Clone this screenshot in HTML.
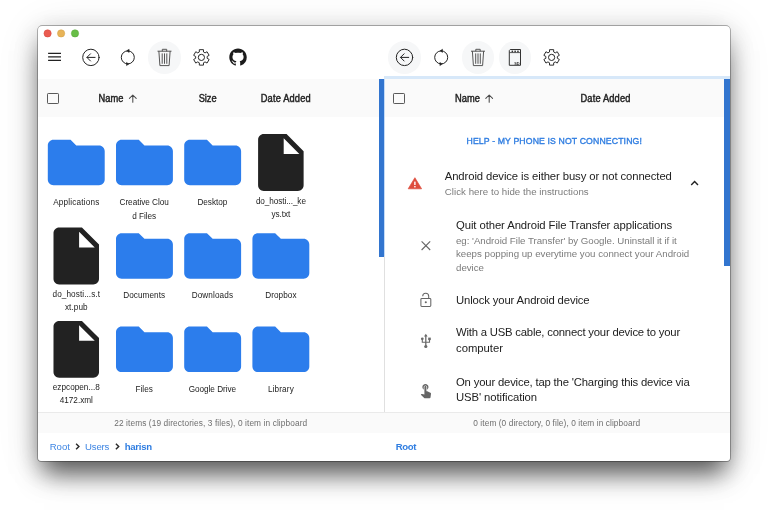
<!DOCTYPE html>
<html lang="en"><head><meta charset="utf-8"><title>OpenMTP</title>
<style>
html,body{margin:0;padding:0;}
body{width:768px;height:512px;background:#fff;position:relative;overflow:hidden;font-family:"Liberation Sans",sans-serif;}
.abs{position:absolute;}
.t{position:absolute;line-height:20px;white-space:nowrap;}
#win{position:absolute;left:38px;top:25.9px;width:692px;height:435.2px;background:#fff;border-radius:4px 4px 3px 3px;
 box-shadow:0 0 0 0.7px rgba(0,0,0,.4), 0 19px 24px -6px rgba(0,0,0,.55), 0 7px 24px rgba(0,0,0,.2), 0 5px 44px rgba(0,0,0,.11);}
.hdr{position:absolute;top:79px;height:37.9px;background:#fafafa;}
.sbar{position:absolute;top:412px;height:20.5px;background:#fafafa;border-top:1px solid #eaeaea;box-sizing:border-box;}
.cb{position:absolute;top:92.5px;width:11.9px;height:11.5px;border:1.2px solid #5a5a5a;border-radius:1.2px;box-sizing:border-box;}
.ibg{position:absolute;width:32.6px;height:32.6px;border-radius:50%;background:#f6f7f8;top:41.1px;}
svg{position:absolute;overflow:visible;will-change:transform;}
#txt{position:absolute;left:0;top:0;width:768px;height:512px;will-change:transform;}

</style></head>
<body>
<div id="win"></div>

<!-- header rows -->
<div class="hdr" style="left:38px;width:341px;"></div>
<div class="hdr" style="left:384px;width:340px;"></div>
<div class="abs" style="left:384px;top:75.9px;width:346px;height:3.1px;background:#d7e8f9;"></div>
<div class="abs" style="left:379.2px;top:79px;width:5.1px;height:177.7px;background:#3275cf;"></div>
<div class="abs" style="left:384.3px;top:79px;width:0.9px;height:177.7px;background:#c3dbf8;"></div>
<div class="abs" style="left:384px;top:256px;width:0.7px;height:156px;background:#e0e0e0;"></div>
<div class="abs" style="left:724.2px;top:79px;width:5.8px;height:186.5px;background:#3275cf;"></div>
<div class="cb" style="left:47.2px;"></div>
<div class="cb" style="left:393.4px;"></div>

<!-- status bars -->
<div class="sbar" style="left:38px;width:346px;"></div>
<div class="sbar" style="left:384px;width:346px;"></div>

<!-- toolbar icon backgrounds -->
<div class="ibg" style="left:148.1px;"></div>
<div class="ibg" style="left:388.2px;"></div>
<div class="ibg" style="left:461.6px;"></div>
<div class="ibg" style="left:498.5px;"></div>

<svg width="768" height="512" viewBox="0 0 768 512" style="left:0;top:0;">


<!-- traffic lights -->
<circle cx="47.6" cy="33.4" r="3.65" fill="#ea5b50" stroke="#d5493f" stroke-width="0.5"/>
<circle cx="61.1" cy="33.4" r="3.65" fill="#e8b458" stroke="#d3a048" stroke-width="0.5"/>
<circle cx="75" cy="33.4" r="3.65" fill="#68be47" stroke="#56a838" stroke-width="0.5"/>
<!-- hamburger -->
<g stroke="#222" stroke-width="1.25"><path d="M48.1 53.4H61M48.1 56.9H61M48.1 60.4H61"/></g>
<g transform="translate(90.9 57.4)"><g fill="none" stroke="#222" stroke-width="1" stroke-linecap="round" stroke-linejoin="round">
 <circle cx="0" cy="0" r="8.2"/>
 <path d="M4.2 0H-3.8M-0.4 -3.6L-4 0L-0.4 3.6"/>
</g></g>
<g transform="translate(127.8 57.4)"><g fill="none" stroke="#222" stroke-width="1" stroke-linejoin="round">
 <circle cx="0" cy="0" r="6.5"/>
 <path d="M-1.1 -6.6L1.3 -8.2V-5Z" fill="#222" stroke-width="0.5"/>
 <path d="M1.1 6.6L-1.3 8.2V5Z" fill="#222" stroke-width="0.5"/>
</g></g>
<g transform="translate(164.5 57.4)"><g fill="none" stroke="#555" stroke-width="1" stroke-linecap="round" stroke-linejoin="round">
 <path d="M-6.6 -6.2H6.6"/>
 <path d="M-2.2 -6.4V-8.1H2.2V-6.4"/>
 <path d="M-5.6 -6L-4.6 8.2H4.6L5.6 -6"/>
 <path d="M-2.3 -3.6V6M0 -3.6V6M2.3 -3.6V6"/>
</g></g>
<g transform="translate(404.5 57.4)"><g fill="none" stroke="#222" stroke-width="1" stroke-linecap="round" stroke-linejoin="round">
 <circle cx="0" cy="0" r="8.2"/>
 <path d="M4.2 0H-3.8M-0.4 -3.6L-4 0L-0.4 3.6"/>
</g></g>
<g transform="translate(441.2 57.4)"><g fill="none" stroke="#222" stroke-width="1" stroke-linejoin="round">
 <circle cx="0" cy="0" r="6.5"/>
 <path d="M-1.1 -6.6L1.3 -8.2V-5Z" fill="#222" stroke-width="0.5"/>
 <path d="M1.1 6.6L-1.3 8.2V5Z" fill="#222" stroke-width="0.5"/>
</g></g>
<g transform="translate(478 57.4)"><g fill="none" stroke="#555" stroke-width="1" stroke-linecap="round" stroke-linejoin="round">
 <path d="M-6.6 -6.2H6.6"/>
 <path d="M-2.2 -6.4V-8.1H2.2V-6.4"/>
 <path d="M-5.6 -6L-4.6 8.2H4.6L5.6 -6"/>
 <path d="M-2.3 -3.6V6M0 -3.6V6M2.3 -3.6V6"/>
</g></g>

<path d="M199.32 51.99 L199.33 49.67 L203.47 49.67 L203.48 51.99 L205.05 52.89 L207.06 51.74 L209.13 55.33 L207.13 56.49 L207.13 58.31 L209.13 59.47 L207.06 63.06 L205.05 61.91 L203.48 62.81 L203.47 65.13 L199.33 65.13 L199.32 62.81 L197.75 61.91 L195.74 63.06 L193.67 59.47 L195.67 58.31 L195.67 56.49 L193.67 55.33 L195.74 51.74 L197.75 52.89Z" fill="none" stroke="#222" stroke-width="0.95" stroke-linejoin="round"/><circle cx="201.4" cy="57.4" r="3.1" fill="none" stroke="#222" stroke-width="1"/>
<path d="M549.52 51.99 L549.53 49.67 L553.67 49.67 L553.68 51.99 L555.25 52.89 L557.26 51.74 L559.33 55.33 L557.33 56.49 L557.33 58.31 L559.33 59.47 L557.26 63.06 L555.25 61.91 L553.68 62.81 L553.67 65.13 L549.53 65.13 L549.52 62.81 L547.95 61.91 L545.94 63.06 L543.87 59.47 L545.87 58.31 L545.87 56.49 L543.87 55.33 L545.94 51.74 L547.95 52.89Z" fill="none" stroke="#222" stroke-width="0.95" stroke-linejoin="round"/><circle cx="551.6" cy="57.4" r="3.1" fill="none" stroke="#222" stroke-width="1"/>
<!-- github -->
<g transform="translate(229.3 48.6) scale(1.09)">
<path fill="#1b1b1b" d="M8 0C3.58 0 0 3.58 0 8c0 3.54 2.29 6.53 5.47 7.59.4.07.55-.17.55-.38 0-.19-.01-.82-.01-1.49-2.01.37-2.53-.49-2.69-.94-.09-.23-.48-.94-.82-1.13-.28-.15-.68-.52-.01-.53.63-.01 1.08.58 1.23.82.72 1.21 1.87.87 2.33.66.07-.52.28-.87.51-1.07-1.78-.2-3.64-.89-3.64-3.95 0-.87.31-1.59.82-2.15-.08-.2-.36-1.02.08-2.12 0 0 .67-.21 2.2.82.64-.18 1.32-.27 2-.27.68 0 1.36.09 2 .27 1.53-1.04 2.2-.82 2.2-.82.44 1.1.16 1.92.08 2.12.51.56.82 1.27.82 2.15 0 3.07-1.87 3.75-3.65 3.95.29.25.54.73.54 1.48 0 1.07-.01 1.93-.01 2.2 0 .21.15.46.55.38A8.013 8.013 0 0016 8c0-4.42-3.58-8-8-8z"/>
</g>
<!-- sd card -->
<g fill="none" stroke="#333" stroke-width="1" stroke-linejoin="round">
 <path d="M510.2 49.5H520.5V65.3H509.3V50.6Z"/>
 <path d="M509.6 52.6H520.4" stroke-width="0.8"/>
</g>
<g fill="#333"><rect x="511.6" y="50.6" width="1.5" height="1.7"/><rect x="514.4" y="50.6" width="1.5" height="1.7"/><rect x="517.2" y="50.6" width="1.5" height="1.7"/></g>
<text x="514.2" y="64.5" font-family="Liberation Sans, sans-serif" font-size="4.2" textLength="5.4" lengthAdjust="spacingAndGlyphs" font-weight="700" fill="#333">SD</text>

<!-- sort arrows -->
<g fill="none" stroke="#4a4a4a" stroke-width="1.05" stroke-linecap="round" stroke-linejoin="round">
 <path d="M132.8 102.2V95.2M129.4 98.4L132.8 95L136.2 98.4"/>
 <path d="M489.2 102.2V95.2M485.8 98.4L489.2 95L492.6 98.4"/>
</g>

<!-- breadcrumb chevrons -->
<g fill="none" stroke="#2a2a2a" stroke-width="1.45" stroke-linejoin="miter">
 <path d="M76.1 443.8L78.9 446.5L76.1 449.2"/>
 <path d="M115.9 443.8L118.7 446.5L115.9 449.2"/>
</g>

<!-- grid icons -->
<g transform="translate(42.10 128.40) scale(2.8458)"><path d="M10 4H4c-1.1 0-1.99.9-1.99 2L2 18c0 1.1.9 2 2 2h16c1.1 0 2-.9 2-2V8c0-1.1-.9-2-2-2h-8l-2-2z" fill="#2c7dec"/></g>
<g transform="translate(110.30 128.40) scale(2.8458)"><path d="M10 4H4c-1.1 0-1.99.9-1.99 2L2 18c0 1.1.9 2 2 2h16c1.1 0 2-.9 2-2V8c0-1.1-.9-2-2-2h-8l-2-2z" fill="#2c7dec"/></g>
<g transform="translate(178.50 128.40) scale(2.8458)"><path d="M10 4H4c-1.1 0-1.99.9-1.99 2L2 18c0 1.1.9 2 2 2h16c1.1 0 2-.9 2-2V8c0-1.1-.9-2-2-2h-8l-2-2z" fill="#2c7dec"/></g>
<g transform="translate(246.70 128.40) scale(2.8458)"><path d="M6 2c-1.1 0-1.99.9-1.99 2L4 20c0 1.1.89 2 1.99 2H18c1.1 0 2-.9 2-2V8l-6-6H6zm7 7V3.5L18.5 9H13z" fill="#222"/></g>
<g transform="translate(42.10 221.80) scale(2.8458)"><path d="M6 2c-1.1 0-1.99.9-1.99 2L4 20c0 1.1.89 2 1.99 2H18c1.1 0 2-.9 2-2V8l-6-6H6zm7 7V3.5L18.5 9H13z" fill="#222"/></g>
<g transform="translate(110.30 221.80) scale(2.8458)"><path d="M10 4H4c-1.1 0-1.99.9-1.99 2L2 18c0 1.1.9 2 2 2h16c1.1 0 2-.9 2-2V8c0-1.1-.9-2-2-2h-8l-2-2z" fill="#2c7dec"/></g>
<g transform="translate(178.50 221.80) scale(2.8458)"><path d="M10 4H4c-1.1 0-1.99.9-1.99 2L2 18c0 1.1.9 2 2 2h16c1.1 0 2-.9 2-2V8c0-1.1-.9-2-2-2h-8l-2-2z" fill="#2c7dec"/></g>
<g transform="translate(246.70 221.80) scale(2.8458)"><path d="M10 4H4c-1.1 0-1.99.9-1.99 2L2 18c0 1.1.9 2 2 2h16c1.1 0 2-.9 2-2V8c0-1.1-.9-2-2-2h-8l-2-2z" fill="#2c7dec"/></g>
<g transform="translate(42.10 315.20) scale(2.8458)"><path d="M6 2c-1.1 0-1.99.9-1.99 2L4 20c0 1.1.89 2 1.99 2H18c1.1 0 2-.9 2-2V8l-6-6H6zm7 7V3.5L18.5 9H13z" fill="#222"/></g>
<g transform="translate(110.30 315.20) scale(2.8458)"><path d="M10 4H4c-1.1 0-1.99.9-1.99 2L2 18c0 1.1.9 2 2 2h16c1.1 0 2-.9 2-2V8c0-1.1-.9-2-2-2h-8l-2-2z" fill="#2c7dec"/></g>
<g transform="translate(178.50 315.20) scale(2.8458)"><path d="M10 4H4c-1.1 0-1.99.9-1.99 2L2 18c0 1.1.9 2 2 2h16c1.1 0 2-.9 2-2V8c0-1.1-.9-2-2-2h-8l-2-2z" fill="#2c7dec"/></g>
<g transform="translate(246.70 315.20) scale(2.8458)"><path d="M10 4H4c-1.1 0-1.99.9-1.99 2L2 18c0 1.1.9 2 2 2h16c1.1 0 2-.9 2-2V8c0-1.1-.9-2-2-2h-8l-2-2z" fill="#2c7dec"/></g>


<!-- right pane icons -->
<!-- warning -->
<path d="M414.9 177.7L421.6 188.8H408.2Z" fill="#de4d3d" stroke="#de4d3d" stroke-width="0.7" stroke-linejoin="round"/>
<rect x="414.2" y="181.6" width="1.4" height="3.4" fill="#fff"/>
<rect x="414.2" y="186" width="1.4" height="1.4" fill="#fff"/>
<!-- chevron up -->
<path d="M691.2 185L694.6 181.6L698 185" fill="none" stroke="#222" stroke-width="1.4"/>
<!-- X -->
<path d="M421.6 241.4L430.2 250M430.2 241.4L421.6 250" fill="none" stroke="#666" stroke-width="1.1"/>
<!-- lock -->
<g fill="none" stroke="#666" stroke-width="1.05">
 <rect x="420.9" y="298.4" width="9.9" height="8" rx="0.9"/>
 <path d="M428.7 298.2V296.2A3 3 0 0 0 422.7 296.2"/>
</g>
<circle cx="425.8" cy="302.3" r="1.05" fill="#666"/>
<!-- usb -->
<g fill="none" stroke="#6a6a6a" stroke-width="1.1">
 <path d="M425.8 335V346.5" stroke-width="1.3"/>
 <path d="M422.3 339V342.2H429.5V339"/>
</g>
<g fill="#6a6a6a">
 <path d="M425.8 333.8L427.6 336.4H424Z"/>
 <circle cx="425.8" cy="346.5" r="1.6"/>
 <circle cx="422.3" cy="338.8" r="1.35"/>
 <rect x="428.2" y="337.6" width="2.6" height="2.5"/>
</g>
<!-- touch -->
<g transform="translate(417.6 382.0) scale(0.68)">
<path fill="#666" d="M9 11.24V7.5C9 6.12 10.12 5 11.5 5S14 6.12 14 7.5v3.74c1.21-.81 2-2.18 2-3.74C16 5.01 13.99 3 11.5 3S7 5.01 7 7.5c0 1.56.79 2.93 2 3.74zm9.84 4.63l-4.54-2.26c-.17-.07-.35-.11-.54-.11H13v-6c0-.83-.67-1.5-1.5-1.5S10 6.67 10 7.5v10.74l-3.43-.72c-.08-.01-.15-.03-.24-.03-.31 0-.59.13-.79.33l-.79.8 4.94 4.94c.27.27.65.44 1.06.44h6.79c.75 0 1.33-.55 1.44-1.28l.75-5.27c.01-.07.02-.14.02-.2 0-.62-.38-1.16-.91-1.38z"/>
</g>
</svg>

<div id="txt">
<div class="t" id="t0" style="top:89.00px;font-size:9.3px;color:#222;font-weight:400;transform:scaleY(1.08);transform-origin:0 13px;-webkit-text-stroke:0.4px #222;letter-spacing:0.047px;left:98.50px;"><span>Name</span></div>
<div class="t" id="t1" style="top:89.00px;font-size:9.3px;color:#222;font-weight:400;transform:scaleY(1.08);transform-origin:0 13px;-webkit-text-stroke:0.4px #222;letter-spacing:-0.086px;left:198.75px;"><span>Size</span></div>
<div class="t" id="t2" style="top:89.00px;font-size:9.3px;color:#222;font-weight:400;transform:scaleY(1.08);transform-origin:0 13px;-webkit-text-stroke:0.4px #222;letter-spacing:0.141px;left:260.75px;"><span>Date Added</span></div>
<div class="t" id="t3" style="top:89.00px;font-size:9.3px;color:#222;font-weight:400;transform:scaleY(1.08);transform-origin:0 13px;-webkit-text-stroke:0.4px #222;letter-spacing:0.047px;left:455.00px;"><span>Name</span></div>
<div class="t" id="t4" style="top:89.00px;font-size:9.3px;color:#222;font-weight:400;transform:scaleY(1.08);transform-origin:0 13px;-webkit-text-stroke:0.4px #222;letter-spacing:0.141px;left:580.50px;"><span>Date Added</span></div>
<div class="t" id="t5" style="top:193.00px;font-size:8.2px;color:#1c1c1c;font-weight:400;letter-spacing:0.174px;left:-23.70px;width:200px;text-align:center;"><span>Applications</span></div>
<div class="t" id="t6" style="top:193.00px;font-size:8.2px;color:#1c1c1c;font-weight:400;letter-spacing:-0.024px;left:44.20px;width:200px;text-align:center;"><span>Creative Clou</span></div>
<div class="t" id="t7" style="top:207.00px;font-size:8.2px;color:#1c1c1c;font-weight:400;letter-spacing:-0.046px;left:44.20px;width:200px;text-align:center;"><span>d Files</span></div>
<div class="t" id="t8" style="top:193.00px;font-size:8.2px;color:#1c1c1c;font-weight:400;letter-spacing:-0.007px;left:112.40px;width:200px;text-align:center;"><span>Desktop</span></div>
<div class="t" id="t9" style="top:192.00px;font-size:8.2px;color:#1c1c1c;font-weight:400;letter-spacing:-0.070px;left:180.90px;width:200px;text-align:center;"><span>do_hosti..._ke</span></div>
<div class="t" id="t10" style="top:205.00px;font-size:8.2px;color:#1c1c1c;font-weight:400;letter-spacing:-0.070px;left:180.90px;width:200px;text-align:center;"><span>ys.txt</span></div>
<div class="t" id="t11" style="top:285.00px;font-size:8.2px;color:#1c1c1c;font-weight:400;letter-spacing:0.076px;left:-23.70px;width:200px;text-align:center;"><span>do_hosti...s.t</span></div>
<div class="t" id="t12" style="top:298.00px;font-size:8.2px;color:#1c1c1c;font-weight:400;letter-spacing:0.076px;left:-23.70px;width:200px;text-align:center;"><span>xt.pub</span></div>
<div class="t" id="t13" style="top:286.00px;font-size:8.2px;color:#1c1c1c;font-weight:400;letter-spacing:0.064px;left:44.20px;width:200px;text-align:center;"><span>Documents</span></div>
<div class="t" id="t14" style="top:286.00px;font-size:8.2px;color:#1c1c1c;font-weight:400;letter-spacing:0.109px;left:112.40px;width:200px;text-align:center;"><span>Downloads</span></div>
<div class="t" id="t15" style="top:286.00px;font-size:8.2px;color:#1c1c1c;font-weight:400;letter-spacing:0.078px;left:180.90px;width:200px;text-align:center;"><span>Dropbox</span></div>
<div class="t" id="t16" style="top:378.00px;font-size:8.2px;color:#1c1c1c;font-weight:400;letter-spacing:0.009px;left:-23.70px;width:200px;text-align:center;"><span>ezpcopen...8</span></div>
<div class="t" id="t17" style="top:391.00px;font-size:8.2px;color:#1c1c1c;font-weight:400;letter-spacing:0.009px;left:-23.70px;width:200px;text-align:center;"><span>4172.xml</span></div>
<div class="t" id="t18" style="top:380.00px;font-size:8.2px;color:#1c1c1c;font-weight:400;letter-spacing:0.041px;left:44.20px;width:200px;text-align:center;"><span>Files</span></div>
<div class="t" id="t19" style="top:380.00px;font-size:8.2px;color:#1c1c1c;font-weight:400;letter-spacing:-0.025px;left:112.40px;width:200px;text-align:center;"><span>Google Drive</span></div>
<div class="t" id="t20" style="top:380.00px;font-size:8.2px;color:#1c1c1c;font-weight:400;letter-spacing:0.138px;left:180.90px;width:200px;text-align:center;"><span>Library</span></div>
<div class="t" id="t21" style="top:413.00px;font-size:8.3px;color:#6e6e6e;font-weight:400;letter-spacing:0.105px;left:114.25px;"><span>22 items (19 directories, 3 files), 0 item in clipboard</span></div>
<div class="t" id="t22" style="top:413.00px;font-size:8.3px;color:#6e6e6e;font-weight:400;letter-spacing:0.089px;left:473.25px;"><span>0 item (0 directory, 0 file), 0 item in clipboard</span></div>
<div class="t" id="t23" style="top:437.00px;font-size:9.6px;color:#3f86e3;font-weight:400;letter-spacing:-0.066px;left:49.75px;"><span>Root</span></div>
<div class="t" id="t24" style="top:437.00px;font-size:9.6px;color:#3f86e3;font-weight:400;letter-spacing:-0.163px;left:85.00px;"><span>Users</span></div>
<div class="t" id="t25" style="top:437.00px;font-size:9.6px;color:#2f7de1;font-weight:700;letter-spacing:-0.299px;left:124.75px;"><span>harisn</span></div>
<div class="t" id="t26" style="top:437.00px;font-size:9.6px;color:#2f7de1;font-weight:700;letter-spacing:-0.398px;left:395.75px;"><span>Root</span></div>
<div class="t" id="t27" style="top:131.00px;font-size:8.7px;color:#2f7de1;font-weight:400;transform:scaleY(1.12);transform-origin:0 13px;-webkit-text-stroke:0.35px #2f7de1;letter-spacing:0.136px;left:466.50px;"><span>HELP - MY PHONE IS NOT CONNECTING!</span></div>
<div class="t" id="t28" style="top:166.00px;font-size:11.3px;color:#222;font-weight:400;letter-spacing:-0.103px;left:444.75px;"><span>Android device is either busy or not connected</span></div>
<div class="t" id="t29" style="top:182.00px;font-size:9.7px;color:#7b7b7b;font-weight:400;letter-spacing:0.037px;left:444.75px;"><span>Click here to hide the instructions</span></div>
<div class="t" id="t30" style="top:215.00px;font-size:11.3px;color:#222;font-weight:400;letter-spacing:-0.084px;left:456.00px;"><span>Quit other Android File Transfer applications</span></div>
<div class="t" id="t31" style="top:231.00px;font-size:9.7px;color:#7b7b7b;font-weight:400;letter-spacing:-0.018px;left:456.00px;"><span>eg: 'Android File Transfer' by Google. Uninstall it if it</span></div>
<div class="t" id="t32" style="top:244.00px;font-size:9.7px;color:#7b7b7b;font-weight:400;letter-spacing:0.000px;left:456.00px;"><span>keeps popping up everytime you connect your Android</span></div>
<div class="t" id="t33" style="top:258.00px;font-size:9.7px;color:#7b7b7b;font-weight:400;letter-spacing:0.000px;left:456.00px;"><span>device</span></div>
<div class="t" id="t34" style="top:290.00px;font-size:11.3px;color:#222;font-weight:400;letter-spacing:-0.131px;left:456.00px;"><span>Unlock your Android device</span></div>
<div class="t" id="t35" style="top:322.00px;font-size:11.3px;color:#222;font-weight:400;letter-spacing:-0.199px;left:456.00px;"><span>With a USB cable, connect your device to your</span></div>
<div class="t" id="t36" style="top:338.00px;font-size:11.3px;color:#222;font-weight:400;letter-spacing:-0.012px;left:456.00px;"><span>computer</span></div>
<div class="t" id="t37" style="top:372.00px;font-size:11.3px;color:#222;font-weight:400;letter-spacing:-0.174px;left:456.00px;"><span>On your device, tap the 'Charging this device via</span></div>
<div class="t" id="t38" style="top:387.00px;font-size:11.3px;color:#222;font-weight:400;letter-spacing:-0.091px;left:456.00px;"><span>USB' notification</span></div>
</div>
</body></html>
